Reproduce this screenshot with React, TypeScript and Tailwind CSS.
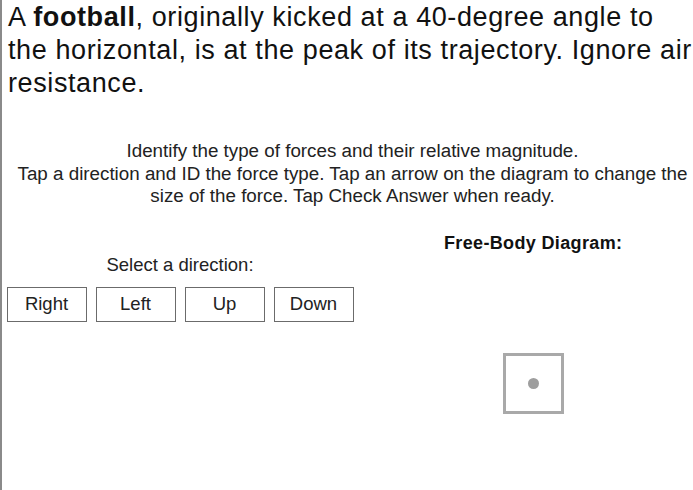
import React from "react";

const DIRECTIONS = ["Right", "Left", "Up", "Down"];

export default function App(): JSX.Element {
  return (
    <div className="min-h-[490px] w-[693px] border-l-2 border-[#8a8a8a] bg-white font-['Liberation_Sans',Arial,sans-serif] text-[#111]">
      {/* Question */}
      <p className="pl-[6px] pt-[1px] text-[27px] leading-[33px] tracking-[0.6px]">
        A <b>football</b>, originally kicked at a 40-degree angle to the horizontal, is at the peak of its trajectory. Ignore air resistance.
      </p>

      {/* Instructions */}
      <div className="mt-[40px] pl-[10px] pr-0 text-center text-[18.8px] leading-[22.5px] text-[#222]">
        <div>Identify the type of forces and their relative magnitude.</div>
        <div>
          Tap a direction and ID the force type. Tap an arrow on the diagram to change the size of the force. Tap Check Answer when ready.
        </div>
      </div>

      <div className="mt-[24px] flex">
        {/* Direction picker */}
        <div className="flex w-[356px] flex-col items-center pt-[22px]">
          <div className="text-[18.5px] leading-[22px] text-[#222]">Select a direction:</div>
          <div className="mt-[11px] flex gap-[9px]">
            {DIRECTIONS.map((d) => (
              <button
                key={d}
                className="h-[35px] w-[80px] border-[1.5px] border-[#6b6b6b] bg-white text-[18.5px] text-[#222]"
              >
                {d}
              </button>
            ))}
          </div>
        </div>

        {/* Free-body diagram */}
        <div className="flex flex-1 flex-col pl-[86px]">
          <div className="text-[18px] font-bold leading-[22px] tracking-[0.35px] text-[#111]">Free-Body Diagram:</div>
          <div className="ml-[59px] mt-[99px] flex h-[61px] w-[61px] items-center justify-center border-[3px] border-[#a9a9a9]">
            <span className="h-[11px] w-[11px] rounded-full bg-[#9e9e9e]" />
          </div>
        </div>
      </div>
    </div>
  );
}
